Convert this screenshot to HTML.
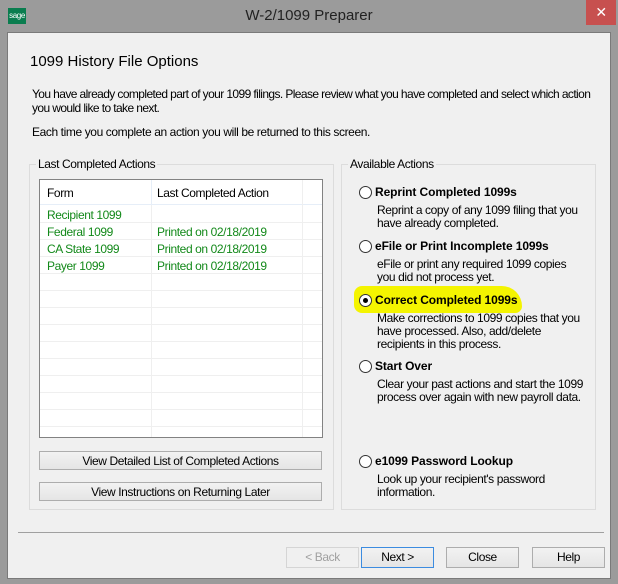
<!DOCTYPE html><html><head><style>
*{margin:0;padding:0;box-sizing:border-box}
body{width:618px;height:584px;background:#9b9b9b;font-family:"Liberation Sans",sans-serif;font-size:12px;letter-spacing:-0.4px;color:#000;position:relative;overflow:hidden}
.a{position:absolute;white-space:nowrap}
.win{position:absolute;left:7px;top:32px;width:604px;height:547px;background:#f0f0f0;border:1px solid #7a7a7a}
.grp{position:absolute;border:1px solid #dcdcdc}
.btn{position:absolute;background:linear-gradient(#f2f2f2,#e5e5e5);border:1px solid #adadad;text-align:center;line-height:19px;font-size:12px}
.g{color:#13891a}
.rad{position:absolute;width:13px;height:13px;border:1px solid #333;border-radius:50%;background:#fff}
.rt{font-weight:bold;font-size:12px;letter-spacing:-0.1px}
.hl{position:absolute;border-top:1px solid #efefef;left:0;right:0}
.vl{position:absolute;border-left:1px solid #efefef;top:0;bottom:0}
</style></head><body>
<div class="a" style="left:8px;top:8px;width:18px;height:16px;background:#0a7d4f;color:#fff;font-size:8px;line-height:16px;text-align:center">sage</div>
<div class="a" style="left:0;width:618px;top:7px;text-align:center;font-size:15px;color:#222;letter-spacing:0">W-2/1099 Preparer</div>
<div class="a" style="left:586px;top:0;width:30px;height:25px;background:#c7504f;color:#fff;text-align:center;line-height:24px;font-size:14px">✕</div>
<div class="win"></div>
<div class="a" style="left:30px;top:53px;font-size:15px;letter-spacing:0">1099 History File Options</div>
<div class="a" style="left:32px;top:87px;line-height:14px;letter-spacing:-0.6px">You have already completed part of your 1099 filings. Please review what you have completed and select which action<br>you would like to take next.</div>
<div class="a" style="left:32px;top:125px">Each time you complete an action you will be returned to this screen.</div>
<div class="grp" style="left:29px;top:164px;width:305px;height:346px"></div>
<div class="a" style="left:36px;top:157px;background:#f0f0f0;padding:0 2px">Last Completed Actions</div>
<div class="a" style="left:39px;top:179px;width:284px;height:259px;background:#fff;border:1px solid #828282;overflow:hidden">
<div style="position:absolute;left:0;top:0;right:0;height:25px;border-bottom:1px solid #e6eef8"></div>
<div class="vl" style="left:111px;border-color:#e6eef8;height:25px;bottom:auto"></div>
<div class="vl" style="left:111px;top:25px"></div>
<div class="vl" style="left:262px"></div>
<div class="a" style="left:7px;top:6px">Form</div>
<div class="a" style="left:117px;top:6px">Last Completed Action</div>
<div class="hl" style="top:42px"></div><div class="hl" style="top:59px"></div><div class="hl" style="top:76px"></div><div class="hl" style="top:93px"></div><div class="hl" style="top:110px"></div><div class="hl" style="top:127px"></div><div class="hl" style="top:144px"></div><div class="hl" style="top:161px"></div><div class="hl" style="top:178px"></div><div class="hl" style="top:195px"></div><div class="hl" style="top:212px"></div><div class="hl" style="top:229px"></div><div class="hl" style="top:246px"></div>
<div class="a g" style="left:7px;top:28px">Recipient 1099</div>
<div class="a g" style="left:7px;top:45px">Federal 1099</div><div class="a g" style="left:117px;top:45px">Printed on 02/18/2019</div>
<div class="a g" style="left:7px;top:62px">CA State 1099</div><div class="a g" style="left:117px;top:62px">Printed on 02/18/2019</div>
<div class="a g" style="left:7px;top:79px">Payer 1099</div><div class="a g" style="left:117px;top:79px">Printed on 02/18/2019</div>
</div>
<div class="btn" style="left:39px;top:451px;width:283px;height:19px">View Detailed List of Completed Actions</div>
<div class="btn" style="left:39px;top:482px;width:283px;height:19px">View Instructions on Returning Later</div>
<div class="grp" style="left:341px;top:164px;width:255px;height:346px"></div>
<div class="a" style="left:348px;top:157px;background:#f0f0f0;padding:0 2px">Available Actions</div>
<div class="rad" style="left:359px;top:186px"></div>
<div class="a rt" style="left:375px;top:185px">Reprint Completed 1099s</div>
<div class="a" style="left:377px;top:204px;line-height:13px">Reprint a copy of any 1099 filing that you<br>have already completed.</div>
<div class="rad" style="left:359px;top:240px"></div>
<div class="a rt" style="left:375px;top:239px">eFile or Print Incomplete 1099s</div>
<div class="a" style="left:377px;top:258px;line-height:13px">eFile or print any required 1099 copies<br>you did not process yet.</div>
<div class="a" style="left:354px;top:286px;width:168px;height:27px;background:#f4f400;border-radius:12px 30px 10px 12px"></div>
<div class="rad" style="left:359px;top:294px"><div style="position:absolute;left:3px;top:3px;width:5px;height:5px;border-radius:50%;background:#000"></div></div>
<div class="a rt" style="left:375px;top:293px">Correct Completed 1099s</div>
<div class="a" style="left:377px;top:312px;line-height:13px">Make corrections to 1099 copies that you<br>have processed. Also, add/delete<br>recipients in this process.</div>
<div class="rad" style="left:359px;top:360px"></div>
<div class="a rt" style="left:375px;top:359px">Start Over</div>
<div class="a" style="left:377px;top:378px;line-height:13px">Clear your past actions and start the 1099<br>process over again with new payroll data.</div>
<div class="rad" style="left:359px;top:455px"></div>
<div class="a rt" style="left:375px;top:454px">e1099 Password Lookup</div>
<div class="a" style="left:377px;top:473px;line-height:13px">Look up your recipient's password<br>information.</div>
<div class="a" style="left:18px;top:532px;width:586px;border-top:1px solid #a0a0a0"></div>
<div class="btn" style="left:286px;top:547px;width:73px;height:21px;color:#a0a0a0;border-color:#d5d5d5;background:#f0f0f0">&lt; Back</div>
<div class="btn" style="left:361px;top:547px;width:73px;height:21px;border-color:#3c8ce0">Next &gt;</div>
<div class="btn" style="left:446px;top:547px;width:73px;height:21px">Close</div>
<div class="btn" style="left:532px;top:547px;width:73px;height:21px">Help</div>
</body></html>
